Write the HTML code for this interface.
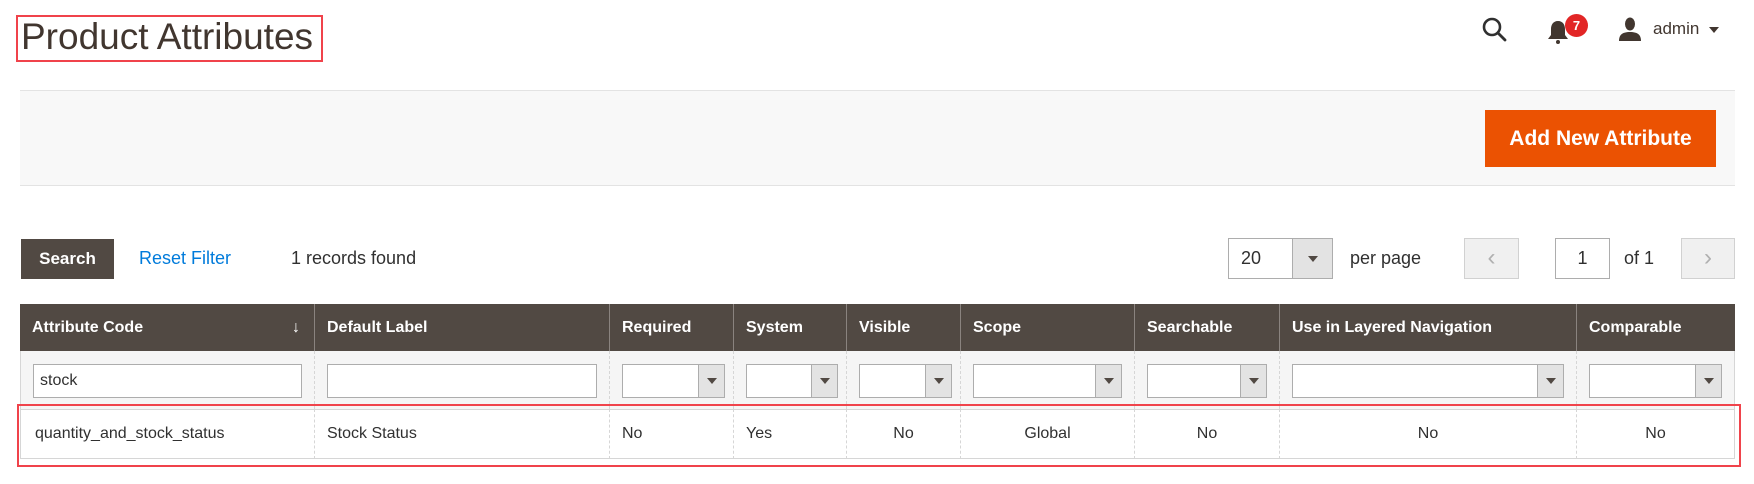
<!DOCTYPE html>
<html><head><meta charset="utf-8"><style>
*{box-sizing:border-box;margin:0;padding:0}
body{width:1754px;height:484px;background:#fff;font-family:"Liberation Sans",Arial,sans-serif;color:#303030;position:relative;overflow:hidden}
.a{position:absolute}
.th{position:absolute;top:304px;height:47px;background:#514943;color:#fff;font-weight:bold;font-size:16px;line-height:47px;padding-left:12px;border-right:1px solid #8a837f;white-space:nowrap}
.fc{position:absolute;top:351px;height:58px;background:#f5f5f5;border-right:1px dashed #d6d6d6}
.dc{position:absolute;top:409px;height:50px;background:#fff;border-right:1px dashed #d6d6d6;border-top:1px solid #d6d6d6;border-bottom:1px solid #d6d6d6;font-size:16px;line-height:48px}
.inp{position:absolute;top:13px;left:12px;right:12px;height:34px;background:#fff;border:1px solid #adadad;font-size:16px;line-height:32px;padding-left:6px}
.arr{position:absolute;right:0;top:0;bottom:0;width:26px;background:#e3e3e3;border-left:1px solid #adadad}
.arr:after{content:"";position:absolute;left:50%;margin-left:-5px;top:50%;margin-top:-3px;border-left:5px solid transparent;border-right:5px solid transparent;border-top:6px solid #514943}
</style></head><body>
<div class="a" style="left:16px;top:15px;width:307px;height:47px;border:2px solid #f0434b"></div>
<div class="a" style="left:21px;top:14px;font-size:37px;line-height:46px;color:#41362f">Product Attributes</div>

<svg class="a" style="left:1481px;top:16px" width="28" height="28" viewBox="0 0 28 28"><circle cx="11" cy="11" r="8" fill="none" stroke="#303030" stroke-width="2.6"/><line x1="17" y1="17" x2="24" y2="24" stroke="#303030" stroke-width="2.8" stroke-linecap="round"/></svg>
<svg class="a" style="left:1546px;top:19px" width="24" height="26" viewBox="0 0 24 26"><path d="M12 2c-5 0-7 4-7 8v6l-3 4h20l-3-4v-6c0-4-2-8-7-8z" fill="#41362f"/><circle cx="12" cy="23" r="2" fill="#41362f"/></svg>
<div class="a" style="left:1565px;top:14px;width:23px;height:23px;border-radius:50%;background:#e22626;color:#fff;font-weight:bold;font-size:13px;line-height:23px;text-align:center">7</div>
<svg class="a" style="left:1619px;top:17px" width="22" height="24" viewBox="0 0 22 24"><ellipse cx="11" cy="7" rx="5" ry="6.5" fill="#41362f"/><path d="M0 24c0-6 3-9 11-9s11 3 11 9z" fill="#41362f"/></svg>
<div class="a" style="left:1653px;top:19px;font-size:17px;color:#41362f">admin</div>
<div class="a" style="left:1709px;top:27px;border-left:5px solid transparent;border-right:5px solid transparent;border-top:6px solid #41362f"></div>

<div class="a" style="left:20px;top:90px;width:1715px;height:96px;background:#f8f8f8;border-top:1px solid #e3e3e3;border-bottom:1px solid #e3e3e3"></div>
<div class="a" style="left:1485px;top:110px;width:231px;height:57px;background:#eb5202;color:#fff;font-weight:bold;font-size:21px;line-height:57px;text-align:center">Add New Attribute</div>

<div class="a" style="left:21px;top:239px;width:93px;height:40px;background:#514943;color:#fff;font-weight:bold;font-size:17px;line-height:40px;text-align:center">Search</div>
<div class="a" style="left:139px;top:248px;font-size:18px;color:#007bdb">Reset Filter</div>
<div class="a" style="left:291px;top:248px;font-size:18px;color:#303030">1 records found</div>

<div class="a" style="left:1228px;top:238px;width:105px;height:41px;border:1px solid #adadad;background:#fff;font-size:18px;line-height:39px;padding-left:12px">20<div class="arr" style="width:40px;background:#e3e3e3"></div></div>
<div class="a" style="left:1350px;top:248px;font-size:18px">per page</div>
<div class="a" style="left:1464px;top:238px;width:55px;height:41px;border:1px solid #d1d1d1;background:#f0f0f0;color:#b0b0b0;font-size:24px;line-height:37px;text-align:center">&#8249;</div>
<div class="a" style="left:1555px;top:238px;width:55px;height:41px;border:1px solid #adadad;background:#fff;font-size:18px;line-height:39px;text-align:center">1</div>
<div class="a" style="left:1624px;top:248px;font-size:18px">of 1</div>
<div class="a" style="left:1681px;top:238px;width:54px;height:41px;border:1px solid #d1d1d1;background:#f0f0f0;color:#b0b0b0;font-size:24px;line-height:37px;text-align:center">&#8250;</div>

<div class="th" style="left:20px;width:295px">Attribute Code<span style="position:absolute;right:14px;font-weight:normal">&#8595;</span></div>
<div class="th" style="left:315px;width:295px">Default Label</div>
<div class="th" style="left:610px;width:124px">Required</div>
<div class="th" style="left:734px;width:113px">System</div>
<div class="th" style="left:847px;width:114px">Visible</div>
<div class="th" style="left:961px;width:174px">Scope</div>
<div class="th" style="left:1135px;width:145px">Searchable</div>
<div class="th" style="left:1280px;width:297px">Use in Layered Navigation</div>
<div class="th" style="left:1577px;width:158px;border-right:0">Comparable</div>

<div class="fc" style="left:20px;width:295px;border-left:1px solid #d6d6d6"><div class="inp">stock</div></div>
<div class="fc" style="left:315px;width:295px"><div class="inp"></div></div>
<div class="fc" style="left:610px;width:124px"><div class="inp" style="right:8px;left:12px"><div class="arr"></div></div></div>
<div class="fc" style="left:734px;width:113px"><div class="inp" style="right:8px;left:12px"><div class="arr"></div></div></div>
<div class="fc" style="left:847px;width:114px"><div class="inp" style="right:8px;left:12px"><div class="arr"></div></div></div>
<div class="fc" style="left:961px;width:174px"><div class="inp"><div class="arr"></div></div></div>
<div class="fc" style="left:1135px;width:145px"><div class="inp"><div class="arr"></div></div></div>
<div class="fc" style="left:1280px;width:297px"><div class="inp"><div class="arr"></div></div></div>
<div class="fc" style="left:1577px;width:158px;border-right:1px solid #d6d6d6"><div class="inp"><div class="arr"></div></div></div>

<div class="dc" style="left:20px;width:295px;border-left:1px solid #d6d6d6;padding-left:14px">quantity_and_stock_status</div>
<div class="dc" style="left:315px;width:295px;padding-left:12px">Stock Status</div>
<div class="dc" style="left:610px;width:124px;padding-left:12px">No</div>
<div class="dc" style="left:734px;width:113px;padding-left:12px">Yes</div>
<div class="dc" style="left:847px;width:114px;text-align:center">No</div>
<div class="dc" style="left:961px;width:174px;text-align:center">Global</div>
<div class="dc" style="left:1135px;width:145px;text-align:center">No</div>
<div class="dc" style="left:1280px;width:297px;text-align:center">No</div>
<div class="dc" style="left:1577px;width:158px;text-align:center;border-right:1px solid #d6d6d6">No</div>

<div class="a" style="left:17px;top:404px;width:1724px;height:63px;border:2px solid #f0434b"></div>
</body></html>
